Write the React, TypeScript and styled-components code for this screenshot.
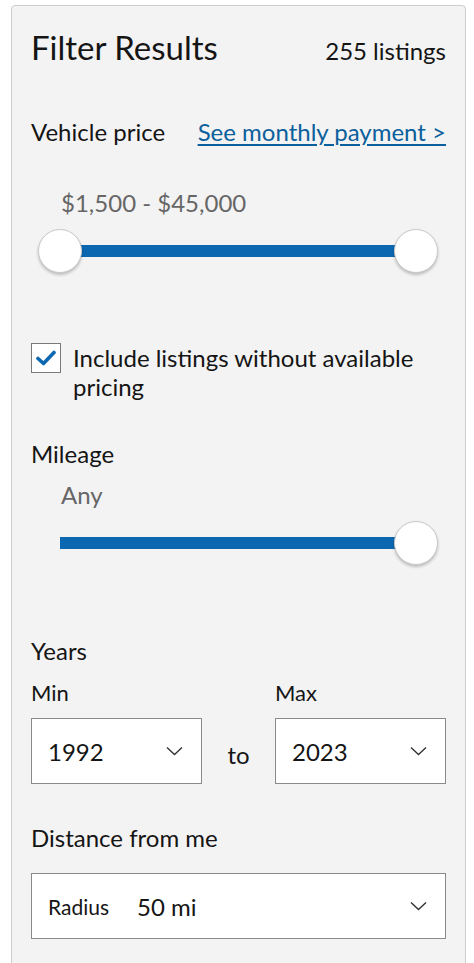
import React from "react";
import styled, { createGlobalStyle } from "styled-components";

const Global = createGlobalStyle`
  html, body { margin: 0; padding: 0; background: #ffffff; }
  body { font-family: Lato, "Open Sans", "Liberation Sans", sans-serif; color: #1b1b1b; overflow: hidden; }
  * { box-sizing: border-box; }
`;

const Panel = styled.div`
  margin: 5px 8px 0 11px;
  width: 455px;
  min-height: 980px;
  background: #f3f3f3;
  border: 1px solid #cdcdcd;
  border-radius: 4px;
  padding: 22px 19px 40px 19px;
  display: flex;
  flex-direction: column;
`;

const HeaderRow = styled.div`
  display: flex;
  justify-content: space-between;
  align-items: baseline;
`;

const Title = styled.h1`
  margin: 0;
  font-size: 33px;
  line-height: 38px;
  font-weight: 400;
  color: #151515;
`;

const Count = styled.span`
  font-size: 24px;
  color: #151515;
`;

const SectionRow = styled.div<{ $mt: number }>`
  display: flex;
  justify-content: space-between;
  align-items: baseline;
  margin-top: ${(p) => p.$mt}px;
`;

const Label = styled.div<{ $mt?: number }>`
  font-size: 24px;
  line-height: 30px;
  color: #151515;
  margin-top: ${(p) => p.$mt ?? 0}px;
`;

const Link = styled.a`
  font-size: 24px;
  line-height: 30px;
  color: #0b5f9c;
  text-decoration: underline;
  text-underline-offset: 3px;
  text-decoration-thickness: 1.5px;
`;

const ValueText = styled.div<{ $mt: number }>`
  font-size: 24px;
  line-height: 30px;
  color: #666666;
  padding-left: 30px;
  margin-top: ${(p) => p.$mt}px;
`;

const SliderWrap = styled.div<{ $mt: number }>`
  position: relative;
  height: 44px;
  margin: ${(p) => p.$mt}px 8px 0 7px;
`;

const Track = styled.div`
  position: absolute;
  left: 22px;
  right: 22px;
  top: 16px;
  height: 12px;
  background: #0b68b0;
`;

const Thumb = styled.div<{ $side: "left" | "right" }>`
  position: absolute;
  top: 0;
  ${(p) => (p.$side === "left" ? "left: 0;" : "right: 0;")}
  width: 44px;
  height: 44px;
  border-radius: 50%;
  background: #ffffff;
  border: 1px solid #c9c9c9;
  box-shadow: 0 2px 3px rgba(0, 0, 0, 0.22);
`;

const CheckRow = styled.label<{ $mt: number }>`
  display: flex;
  align-items: flex-start;
  gap: 12px;
  margin-top: ${(p) => p.$mt}px;
`;

const Box = styled.span`
  flex: none;
  width: 30px;
  height: 30px;
  background: #ffffff;
  border: 1px solid #7a7a7a;
  display: flex;
  align-items: center;
  justify-content: center;
`;

const CheckText = styled.span`
  font-size: 24px;
  line-height: 29px;
  color: #151515;
`;

const YearsRow = styled.div`
  display: flex;
  align-items: flex-end;
  margin-top: 12px;
`;

const YearCol = styled.div`
  display: flex;
  flex-direction: column;
  width: 171px;
`;

const SmallLabel = styled.div`
  font-size: 22px;
  line-height: 30px;
  color: #151515;
  margin-bottom: 10px;
`;

const SelectBox = styled.div<{ $wide?: boolean }>`
  height: 66px;
  width: ${(p) => (p.$wide ? "415px" : "171px")};
  background: #ffffff;
  border: 1.5px solid #8a8a8a;
  display: flex;
  align-items: center;
  padding: 0 18px 0 16px;
`;

const SelectValue = styled.span`
  font-size: 24px;
  color: #151515;
  flex: 1;
`;

const SelectPrefix = styled.span`
  font-size: 21px;
  color: #151515;
  width: 89px;
`;

const To = styled.div`
  width: 73px;
  text-align: center;
  font-size: 24px;
  color: #151515;
  height: 66px;
  line-height: 74px;
`;

const DistanceBox = styled.div`
  margin-top: 20px;
`;

const Chevron = () => (
  <svg width="17" height="10" viewBox="0 0 17 10">
    <polyline points="1,1.5 8.5,8.5 16,1.5" fill="none" stroke="#333" strokeWidth="1.4" />
  </svg>
);

const CheckMark = () => (
  <svg width="20" height="16" viewBox="0 0 20 16">
    <path d="M2 8.5 L7.5 13.5 L18 2.5" fill="none" stroke="#0b68b0" strokeWidth="3.6" strokeLinecap="round" strokeLinejoin="round" />
  </svg>
);

export default function App() {
  return (
    <>
      <Global />
      <Panel>
        <HeaderRow>
          <Title>Filter Results</Title>
          <Count>255 listings</Count>
        </HeaderRow>

        <SectionRow $mt={51}>
          <Label>Vehicle price</Label>
          <Link href="#">See monthly payment &gt;</Link>
        </SectionRow>

        <ValueText $mt={41}>$1,500 - $45,000</ValueText>
        <SliderWrap $mt={11}>
          <Track />
          <Thumb $side="left" />
          <Thumb $side="right" />
        </SliderWrap>

        <CheckRow $mt={70}>
          <Box>
            <CheckMark />
          </Box>
          <CheckText>Include listings without available pricing</CheckText>
        </CheckRow>

        <Label $mt={38}>Mileage</Label>
        <ValueText $mt={11}>Any</ValueText>
        <SliderWrap $mt={11}>
          <Track />
          <Thumb $side="right" />
        </SliderWrap>

        <Label $mt={71}>Years</Label>
        <YearsRow>
          <YearCol>
            <SmallLabel>Min</SmallLabel>
            <SelectBox>
              <SelectValue>1992</SelectValue>
              <Chevron />
            </SelectBox>
          </YearCol>
          <To>to</To>
          <YearCol>
            <SmallLabel>Max</SmallLabel>
            <SelectBox>
              <SelectValue>2023</SelectValue>
              <Chevron />
            </SelectBox>
          </YearCol>
        </YearsRow>

        <Label $mt={39}>Distance from me</Label>
        <DistanceBox>
          <SelectBox $wide>
            <SelectPrefix>Radius</SelectPrefix>
            <SelectValue>50 mi</SelectValue>
            <Chevron />
          </SelectBox>
        </DistanceBox>
      </Panel>
    </>
  );
}
